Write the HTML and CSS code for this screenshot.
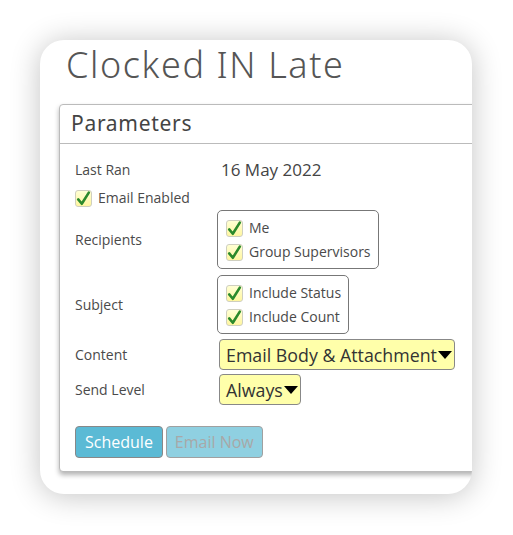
FILE: index.html
```html
<!DOCTYPE html>
<html>
<head>
<meta charset="utf-8">
<link rel="stylesheet" href="styles.css">
</head>
<body>
<div class="card">
  <h1 class="title">Clocked IN Late</h1>
  <div class="panel">
    <div class="panel-head">Parameters</div>
    <div class="panel-body">
      <div class="row r-last">
        <div class="label">Last Ran</div>
        <div class="date">16 May 2022</div>
      </div>

      <div class="row r-email">
        <div class="check-line">
          <span class="cb"><svg viewBox="0 0 17 17"><path d="M3.2 9.4 L6.8 13.8 L13.8 2.6" /></svg></span>
          <span>Email Enabled</span>
        </div>
      </div>

      <div class="row r-recip">
        <div class="label">Recipients</div>
        <div class="box">
          <div class="check-line"><span class="cb"><svg viewBox="0 0 17 17"><path d="M3.2 9.4 L6.8 13.8 L13.8 2.6" /></svg></span><span>Me</span></div>
          <div class="check-line"><span class="cb"><svg viewBox="0 0 17 17"><path d="M3.2 9.4 L6.8 13.8 L13.8 2.6" /></svg></span><span>Group Supervisors</span></div>
        </div>
      </div>

      <div class="row r-subj">
        <div class="label">Subject</div>
        <div class="box">
          <div class="check-line"><span class="cb"><svg viewBox="0 0 17 17"><path d="M3.2 9.4 L6.8 13.8 L13.8 2.6" /></svg></span><span>Include Status</span></div>
          <div class="check-line"><span class="cb"><svg viewBox="0 0 17 17"><path d="M3.2 9.4 L6.8 13.8 L13.8 2.6" /></svg></span><span>Include Count</span></div>
        </div>
      </div>

      <div class="row r-content">
        <div class="label">Content</div>
        <div class="sel-wrap"><span class="select">Email Body &amp; Attachment<span class="caret"></span></span></div>
      </div>

      <div class="row r-level">
        <div class="label">Send Level</div>
        <div class="sel-wrap"><span class="select">Always<span class="caret"></span></span></div>
      </div>

      <div class="buttons">
        <span class="btn primary">Schedule</span>
        <span class="btn disabled">Email Now</span>
      </div>
    </div>
  </div>
</div>
</body>
</html>
```

FILE: styles.css
```css
html, body { margin: 0; padding: 0; background: #fff; }
body { padding: 40px; font-family: "Open Sans", "Noto Sans", sans-serif; color: #4a4a4a; }

.card {
  width: 432px;
  height: 454px;
  box-sizing: border-box;
  border-radius: 24px;
  background: #fff;
  box-shadow: 0 2px 30px rgba(0,0,0,0.24);
  overflow: hidden;
  padding: 0 0 0 19px;
}

.title {
  margin: 0;
  padding: 1px 0 0 7px;
  height: 58px;
  box-sizing: border-box;
  font-family: "Noto Sans", sans-serif;
  font-weight: 300;
  font-size: 36px;
  line-height: 48px;
  letter-spacing: 1.6px;
  color: #555;
}

.panel {
  margin-top: 6px;
  width: 460px;
  border: 1px solid #bbb;
  border-radius: 4px 0 0 4px;
  box-shadow: 0 3px 5px rgba(0,0,0,0.3);
  background: #fff;
}

.panel-head {
  height: 39px;
  border-bottom: 1px solid #bbb;
  box-sizing: border-box;
  padding: 4px 0 0 11px;
  font-family: "Noto Sans", sans-serif;
  font-size: 21px;
  line-height: 28px;
  letter-spacing: 0.7px;
  color: #444;
}

.panel-body { padding: 14px 0 13px 15px; font-size: 14px; }

.row { display: flex; align-items: center; }
.label { width: 142px; flex: none; line-height: 20px; }

.r-last { height: 24px; }
.r-email { margin-top: 6px; }
.r-recip { margin-top: 2px; }
.r-subj { margin-top: 6px; }
.r-content { margin-top: 5px; }
.r-level { margin-top: 4px; }

.date { font-size: 17px; line-height: 24px; padding-left: 4px; color: #444; }

.check-line { display: flex; align-items: center; gap: 6px; height: 20px; line-height: 20px; }

.cb {
  width: 17px; height: 17px;
  box-sizing: border-box;
  border: 1px solid #cfcfbf;
  border-radius: 3px;
  background: linear-gradient(#ffffd4, #fff6a0);
  display: inline-flex;
}
.cb svg { width: 17px; height: 17px; margin: -1px; }
.cb path { fill: none; stroke: #2c8a2c; stroke-width: 2.6; stroke-linecap: round; stroke-linejoin: round; }

.box {
  border: 1px solid #777;
  border-radius: 5px;
  padding: 7px 7px 6px 8px;
  display: flex;
  flex-direction: column;
  gap: 4px;
}

.sel-wrap { padding-left: 2px; }

.select {
  display: inline-flex;
  align-items: center;
  height: 31px;
  box-sizing: border-box;
  border: 1px solid #888;
  border-radius: 4px;
  background: #ffffaa;
  padding: 0 2px 0 6px;
  font-size: 17.8px;
  color: #333;
}
.caret {
  width: 0; height: 0;
  border-left: 7px solid transparent;
  border-right: 7px solid transparent;
  border-top: 8px solid #000;
  margin-left: 1px;
}

.buttons { display: flex; gap: 3px; margin-top: 21px; }

.btn {
  display: inline-block;
  height: 32px;
  box-sizing: border-box;
  border: 1px solid #888;
  border-radius: 4px;
  padding: 0 9px;
  font-size: 16px;
  line-height: 30px;
}
.primary { background: #5bbad5; color: #fff; }
.disabled { background: #8fd0e1; color: #a8a8a8; border-color: #a0a0a0; padding: 0 8px; }
```
